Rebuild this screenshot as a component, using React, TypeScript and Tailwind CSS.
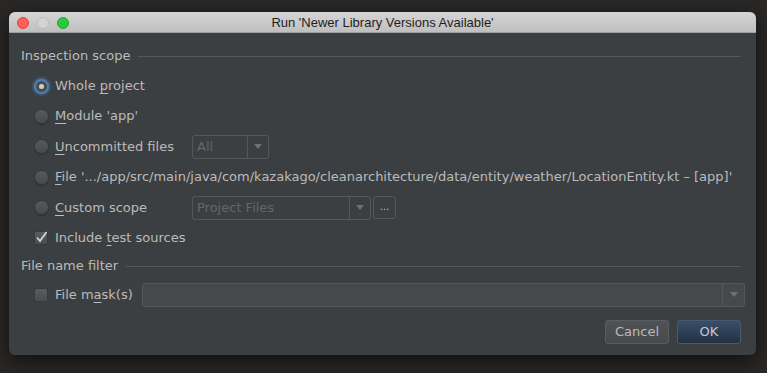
const body = { fontFamily: '"DejaVu Sans", "Liberation Sans", sans-serif' };

function U({ children }: { children: React.ReactNode }) {
  return <span className="underline underline-offset-[3px] decoration-[1px]">{children}</span>;
}

function Radio({ checked }: { checked?: boolean }) {
  if (checked) {
    return (
      <span className="w-[15px] h-[15px] rounded-full shrink-0 flex items-center justify-center bg-[#4a4e50] border-2 border-[#4d7fb5] shadow-[0_0_3px_1px_rgba(80,140,210,0.6)]">
        <span className="w-[5px] h-[5px] rounded-full bg-[#cfcfcf]" />
      </span>
    );
  }
  return (
    <span className="w-[15px] h-[15px] rounded-full shrink-0 bg-gradient-to-b from-[#565a5c] to-[#474b4d] border border-[#36393b] shadow-[0_1px_1px_rgba(0,0,0,0.3)]" />
  );
}

function Check({ checked }: { checked?: boolean }) {
  return (
    <span className="w-[14px] h-[14px] rounded-[2px] shrink-0 bg-gradient-to-b from-[#595d60] to-[#4a4d50] border border-[#36393b] relative">
      {checked && (
        <svg width="14" height="14" viewBox="0 0 14 14" className="absolute -left-[1px] -top-[2px]">
          <path d="M3 7.5 L6 11 L12.5 2" fill="none" stroke="#cfcfcf" strokeWidth="1.9" />
        </svg>
      )}
    </span>
  );
}

function Arrow() {
  return (
    <svg width="8" height="6" viewBox="0 0 8 6">
      <path d="M0 0 H8 L4 5 Z" fill="#6e7173" />
    </svg>
  );
}

function Combo({ label, w }: { label: string; w: string }) {
  return (
    <div className={`${w} h-[24px] flex rounded-[3px] border border-[#55585a] text-[#646668]`}>
      <span className="flex-1 flex items-center pl-[4px]">{label}</span>
      <span className="w-[21px] border-l border-[#55585a] flex items-center justify-center">
        <Arrow />
      </span>
    </div>
  );
}

function Section({ title }: { title: string }) {
  return (
    <div className="h-[16px] flex items-center text-[#bbbbbb]">
      <span>{title}</span>
      <span className="flex-1 ml-[8px] h-px bg-[#545658]" />
    </div>
  );
}

function Row({ h = "h-[30px]", children }: { h?: string; children: React.ReactNode }) {
  return <div className={`${h} flex items-center pl-[13px]`}>{children}</div>;
}

export default function App() {
  return (
    <div className="w-[767px] h-[373px] bg-[#2a2826] overflow-hidden pt-[12px] pl-[9px]">
      <div className="w-[747px] h-[343px] rounded-[6px] overflow-hidden flex flex-col shadow-[0_6px_20px_rgba(0,0,0,0.6)]">
        {/* Title bar */}
        <div className="h-[21px] shrink-0 relative flex items-center justify-center bg-gradient-to-b from-[#d6d5d6] to-[#bfbfbf] border-b border-[#a0a0a0]">
          <div className="absolute left-[8px] top-[5px] flex gap-[8px]">
            <span className="w-[12px] h-[12px] rounded-full bg-[#fb5f57] border border-[#e2463f]" />
            <span className="w-[12px] h-[12px] rounded-full bg-[#d4d4d4] border border-[#bdbdbd]" />
            <span className="w-[12px] h-[12px] rounded-full bg-[#2ac83f] border border-[#1fa82f]" />
          </div>
          <span className="text-[13px] text-[#1e1e1e] pt-px" style={{ fontFamily: '"Liberation Sans", Arial, sans-serif' }}>
            Run 'Newer Library Versions Available'
          </span>
        </div>

        {/* Body */}
        <div className="flex-1 bg-[#3c3f41] pl-[12px] pr-[15px] pt-[15px] text-[13px] text-[#bbbbbb] flex flex-col" style={body}>
          <Section title="Inspection scope" />
          <div className="mt-[7px]">
            <Row>
              <Radio checked />
              <span className="ml-[6px]">Whole <U>p</U>roject</span>
            </Row>
            <Row>
              <Radio />
              <span className="ml-[6px]"><U>M</U>odule 'app'</span>
            </Row>
            <Row h="h-[31px]">
              <Radio />
              <span className="ml-[6px] w-[137px]"><U>U</U>ncommitted files</span>
              <Combo label="All" w="w-[77px]" />
            </Row>
            <Row>
              <Radio />
              <span className="ml-[6px] whitespace-nowrap">
                <U>F</U>ile '.../app/src/main/java/com/kazakago/cleanarchitecture/data/entity/weather/LocationEntity.kt – [app]'
              </span>
            </Row>
            <Row h="h-[31px]">
              <Radio />
              <span className="ml-[6px] w-[137px]"><U>C</U>ustom scope</span>
              <Combo label="Project Files" w="w-[179px]" />
              <span className="ml-[2px] w-[23px] h-[23px] rounded-[3px] border border-[#55585a] flex items-center justify-center text-[#bbbbbb] text-[10px] pb-[3px]">
                ...
              </span>
            </Row>
            <Row h="h-[29px]">
              <Check checked />
              <span className="ml-[7px]">Include <U>t</U>est sources</span>
            </Row>
          </div>

          <div className="mt-[6px]">
            <Section title="File name filter" />
          </div>
          <div className="mt-[6px] h-[30px] flex items-center pl-[13px] -mr-[4px]">
            <Check />
            <span className="ml-[7px] w-[87px]">File m<U>a</U>sk(s)</span>
            <div className="flex-1 h-[24px] flex rounded-[3px] border border-[#55585a] bg-[#45494a]">
              <span className="flex-1" />
              <span className="w-[22px] border-l border-[#55585a] flex items-center justify-center">
                <Arrow />
              </span>
            </div>
          </div>

          <div className="mt-[10px] flex justify-end gap-[8px]">
            <button className="w-[64px] h-[24px] rounded-[3px] border border-[#5b5e60] bg-gradient-to-b from-[#4f5355] to-[#474a4c] text-[#bbbbbb] text-[13px]">
              Cancel
            </button>
            <button className="w-[64px] h-[24px] rounded-[3px] border border-[#4a5a6e] bg-gradient-to-b from-[#384f6b] to-[#233143] text-[#c8c8c8] text-[13px]">
              OK
            </button>
          </div>
        </div>
      </div>
    </div>
  );
}
